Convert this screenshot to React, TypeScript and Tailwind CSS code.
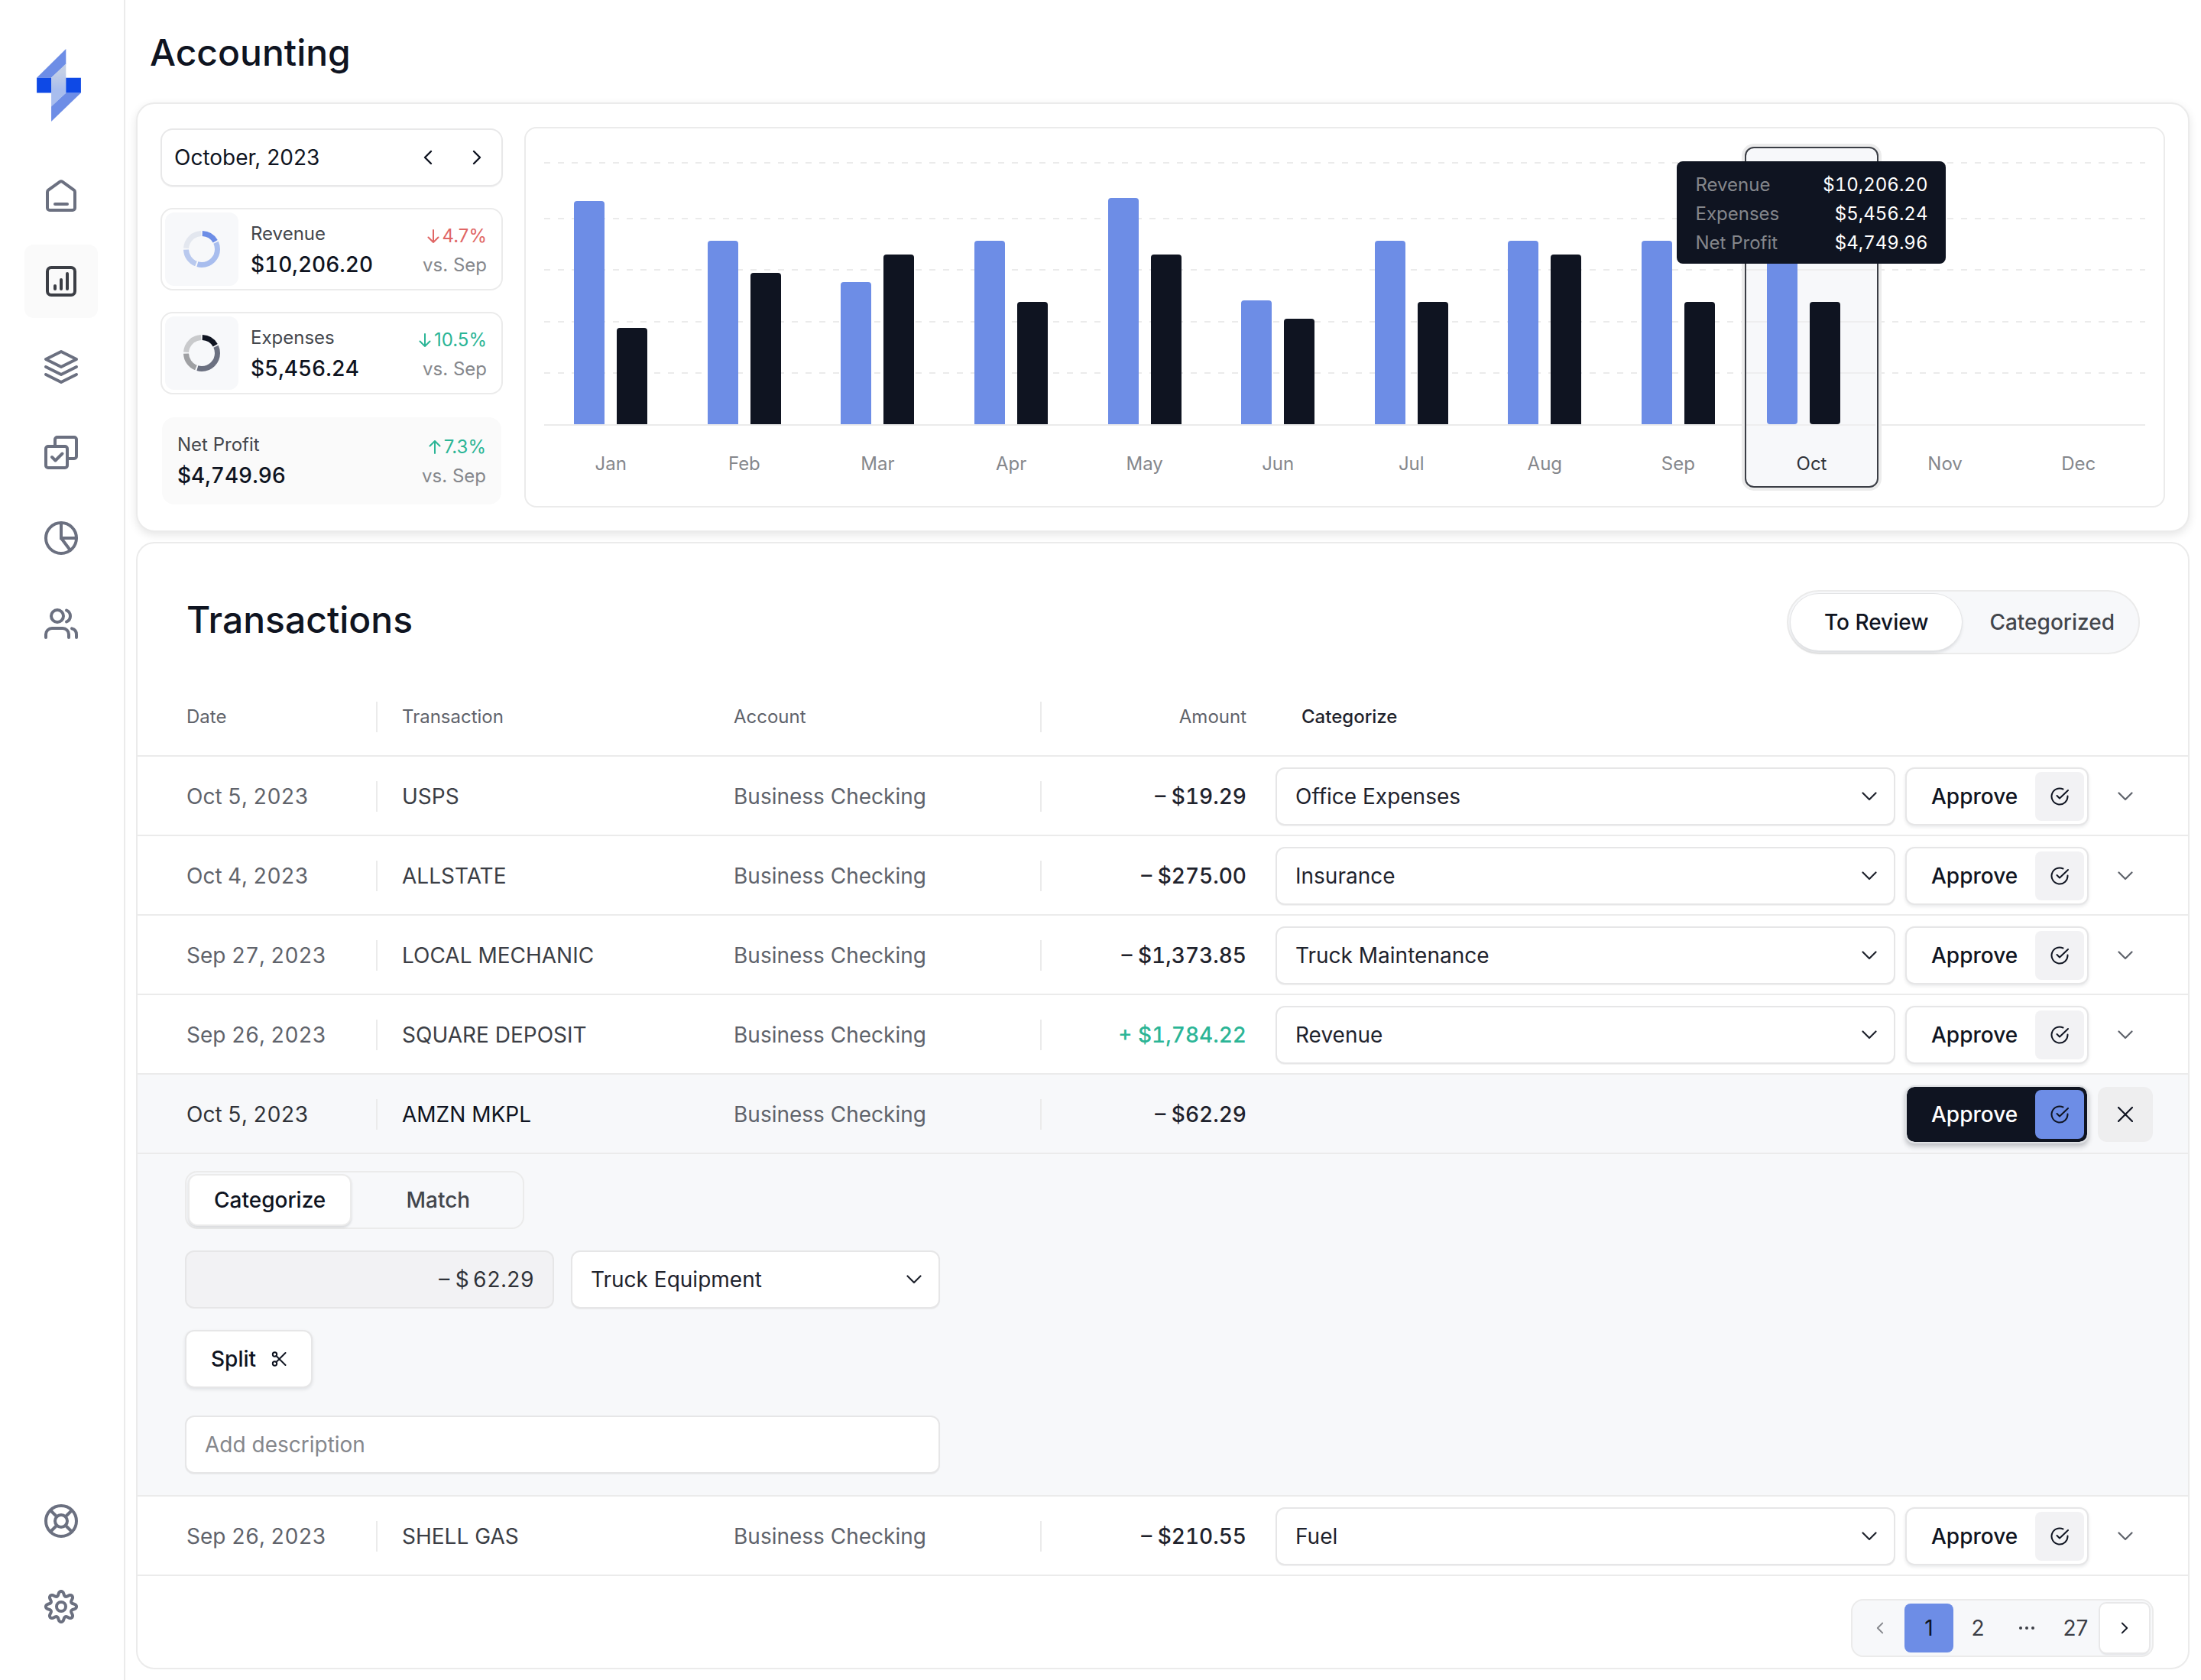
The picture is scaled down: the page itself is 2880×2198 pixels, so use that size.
import React from 'react';
import clsx from 'clsx';

type IconProps = { className?: string };

const months = [
  { name: 'Jan', revenue: 292, expenses: 126 },
  { name: 'Feb', revenue: 240, expenses: 198 },
  { name: 'Mar', revenue: 186, expenses: 222 },
  { name: 'Apr', revenue: 240, expenses: 160 },
  { name: 'May', revenue: 296, expenses: 222 },
  { name: 'Jun', revenue: 162, expenses: 138 },
  { name: 'Jul', revenue: 240, expenses: 160 },
  { name: 'Aug', revenue: 240, expenses: 222 },
  { name: 'Sep', revenue: 240, expenses: 160 },
  { name: 'Oct', revenue: 240, expenses: 160 },
  { name: 'Nov', revenue: 0, expenses: 0 },
  { name: 'Dec', revenue: 0, expenses: 0 },
];

const gridLines = [21, 94, 161, 229, 296];

const transactions = [
  { date: 'Oct 5, 2023', name: 'USPS', amount: '–\u00a0$19.29', category: 'Office Expenses' },
  { date: 'Oct 4, 2023', name: 'ALLSTATE', amount: '–\u00a0$275.00', category: 'Insurance' },
  { date: 'Sep 27, 2023', name: 'LOCAL MECHANIC', amount: '–\u00a0$1,373.85', category: 'Truck Maintenance' },
  { date: 'Sep 26, 2023', name: 'SQUARE DEPOSIT', amount: '+\u00a0$1,784.22', category: 'Revenue' },
  { date: 'Oct 5, 2023', name: 'AMZN MKPL', amount: '–\u00a0$62.29', category: 'Truck Equipment', open: true },
  { date: 'Sep 26, 2023', name: 'SHELL GAS', amount: '–\u00a0$210.55', category: 'Fuel' },
];

// eight rounded teeth around the centre of a 48px box
const gearPath =
  Array.from({ length: 96 }, (_, i) => {
    const a = (i / 96) * Math.PI * 2;
    const wave = Math.cos(a * 8);
    const r = 17.2 + 2.9 * Math.sign(wave) * Math.pow(Math.abs(wave), 0.7);
    return `${i ? 'L' : 'M'}${(24 + r * Math.sin(a)).toFixed(2)} ${(24 - r * Math.cos(a)).toFixed(2)}`;
  }).join('') + 'Z';

const NavIcon = ({ children }: { children: React.ReactNode }) => (
  <svg viewBox="0 0 48 48" className="size-12" fill="none" stroke="currentColor" strokeWidth="4" strokeLinecap="round" strokeLinejoin="round" aria-hidden="true">
    {children}
  </svg>
);

const navItems = [
  {
    label: 'Home',
    icon: (
      <>
        <path d="M6 19.2c0-1 .5-1.9 1.3-2.5L22.2 5.9c1.1-.8 2.5-.8 3.6 0l14.9 10.8c.8.6 1.3 1.5 1.3 2.5V40a3 3 0 0 1-3 3H9a3 3 0 0 1-3-3z" />
        <path d="M16 35h16" />
      </>
    ),
  },
  {
    label: 'Accounting',
    active: true,
    icon: (
      <>
        <rect x="6" y="6" width="36" height="36" rx="5" />
        <path d="M16 30v4M24 22v12M32 14v20" />
      </>
    ),
  },
  { label: 'Layers', icon: <path d="M24 4l20 10-20 10L4 14zM4 24l20 10 20-10M4 34l20 10 20-10" /> },
  {
    label: 'Tasks',
    icon: (
      <>
        <rect x="4" y="16" width="28" height="28" rx="3" />
        <path d="M16 16V7a3 3 0 0 1 3-3h22a3 3 0 0 1 3 3v22a3 3 0 0 1-3 3h-9" />
        <path d="M12 30l4.500 4.500 9-9" />
      </>
    ),
  },
  {
    label: 'Reports',
    icon: (
      <>
        <circle cx="24" cy="24" r="20" />
        <path d="M24 4v20h20M24 24l12 16" strokeLinejoin="miter" />
      </>
    ),
  },
  {
    label: 'People',
    icon: (
      <>
        <circle cx="19" cy="14" r="8" />
        <path d="M31 6.500c3 1.300 5 4.200 5 7.500s-2 6.200-5 7.500" />
        <path d="M4 42v-4a8 8 0 0 1 8-8h14a8 8 0 0 1 8 8v4" />
        <path d="M38 30.400c3.600 1 6 4 6 7.600v4" />
      </>
    ),
  },
];

const footerItems = [
  {
    label: 'Help',
    icon: (
      <>
        <circle cx="24" cy="24" r="20" />
        <circle cx="24" cy="24" r="8" />
        <path d="M10 10l8 8M38 10l-8 8M10 38l8-8M38 38l-8-8" />
      </>
    ),
  },
  {
    label: 'Settings',
    icon: (
      <>
        <path d={gearPath} />
        <circle cx="24" cy="24" r="6" />
      </>
    ),
  },
];

const Logo = () => (
  <svg viewBox="0 0 174 286" className="ml-4 w-[58px] h-[95px]" role="img" aria-label="Logo">
    <defs>
      <linearGradient id="beam" x1="0" y1="0" x2="0" y2="1">
        <stop offset="0.2" stopColor="#c3cfe6" />
        <stop offset="0.6" stopColor="#a8bdee" />
      </linearGradient>
    </defs>
    <path d="M0 114L115 0v60L57 114z" fill="#6d8de6" />
    <path d="M57 226l58-53h59L57 286z" fill="#6d8de6" />
    <path d="M57 114L115 58v115L57 228z" fill="url(#beam)" />
    <path d="M0 114h57v59H0zM115 114h59v59h-59z" fill="#0e49e6" />
  </svg>
);

const ChevronDown = ({ className }: IconProps) => (
  <svg viewBox="0 0 20 12" className={clsx('w-5 h-3', className)} fill="none" stroke="currentColor" strokeWidth="2.200" strokeLinecap="round" strokeLinejoin="round" aria-hidden="true">
    <path d="M1.500 1.500L10 10l8.500-8.500" />
  </svg>
);

const ChevronSide = ({ className }: IconProps) => (
  <svg viewBox="0 0 12 20" className={className} fill="none" stroke="currentColor" strokeWidth="2.400" strokeLinecap="round" strokeLinejoin="round" aria-hidden="true">
    <path d="M2 2l8 8-8 8" />
  </svg>
);

const CheckCircle = () => (
  <svg viewBox="0 0 24 24" className="size-6" fill="none" stroke="currentColor" strokeWidth="2" strokeLinecap="round" strokeLinejoin="round" aria-hidden="true">
    <path d="M22.500 11.500A10.500 10.500 0 1 1 16.500 2.500" />
    <path d="M8.500 11l3.500 3.500L23 4" />
  </svg>
);

const Scissors = () => (
  <svg viewBox="0 0 20 20" className="size-5" fill="none" stroke="currentColor" strokeWidth="2" strokeLinecap="round" aria-hidden="true">
    <circle cx="4.500" cy="4" r="2.700" />
    <circle cx="4.500" cy="16" r="2.700" />
    <path d="M6.500 6L18.500 18M6.500 14L18.500 2" />
  </svg>
);

const Arrow = ({ up }: { up?: boolean }) => (
  <svg viewBox="0 0 16 18" className={clsx('w-4 h-[18px]', up && 'rotate-180')} fill="none" stroke="currentColor" strokeWidth="2" strokeLinecap="round" strokeLinejoin="round" aria-hidden="true">
    <path d="M8 1v16M1.500 10.500L8 17l6.500-6.500" />
  </svg>
);

const Donut = ({ colors }: { colors: string[] }) => {
  // start and length of each slice, in percent of the ring
  const slices = [
    [0.6, 16],
    [18, 36.5],
    [56, 18.5],
    [76, 23.2],
  ];
  return (
    <svg viewBox="0 0 48 48" className="size-12 -rotate-90" fill="none" strokeWidth="7" aria-hidden="true">
      {slices.map(([start, length], i) => (
        <circle key={i} cx="24" cy="24" r="20.500" pathLength="100" stroke={colors[i]} strokeDasharray={`${length} ${100 - length}`} strokeDashoffset={-start} />
      ))}
    </svg>
  );
};

const Change = ({ value, up, className }: { value: string; up?: boolean; className: string }) => (
  <div className="flex flex-col items-end pt-1 text-2xl">
    <span className={clsx('flex items-center gap-1 leading-[38px]', className)}>
      <Arrow up={up} />
      {value}
    </span>
    <span className="leading-[38px] text-[#85878c]">vs. Sep</span>
  </div>
);

const StatCard = ({ label, amount, change, tone, colors }: { label: string; amount: string; change: string; tone: string; colors: string[] }) => (
  <div className="flex items-center rounded-2xl border-2 border-[#ebebeb] p-1 pr-[19px]">
    <div className="flex size-24 items-center justify-center rounded-xl bg-[#f7f8fa]">
      <Donut colors={colors} />
    </div>
    <div className="ml-4 flex flex-1 flex-col">
      <span className="text-2xl leading-10 text-[#43464c]">{label}</span>
      <span className="text-[28px] leading-10 font-medium tabular-nums">{amount}</span>
    </div>
    <Change value={change} className={tone} />
  </div>
);

const Tooltip = () => (
  <dl className="absolute top-[19px] left-1/2 z-10 flex w-[352px] -translate-x-1/2 flex-col rounded-lg bg-[#0f1421] px-6 pt-3 pb-2 text-2xl leading-[38px]">
    {[
      ['Revenue', '$10,206.20'],
      ['Expenses', '$5,456.24'],
      ['Net Profit', '$4,749.96'],
    ].map(([label, value]) => (
      <div key={label} className="flex justify-between">
        <dt className="text-[#85878c]">{label}</dt>
        <dd className="tabular-nums text-white">{value}</dd>
      </div>
    ))}
  </dl>
);

const Chart = () => (
  <div className="flex-1 rounded-2xl border-2 border-[#ebebeb] p-6">
    <div className="relative flex h-[446px]">
      <svg className="absolute inset-0 size-full" stroke="#ebebeb" strokeWidth="2" aria-hidden="true">
        {gridLines.map((y) => (
          <line key={y} x1="0" x2="100%" y1={y} y2={y} strokeDasharray="8 10" />
        ))}
        <line x1="0" x2="100%" y1="364" y2="364" />
      </svg>
      {months.map((month) => {
        const active = month.name === 'Oct';
        return (
          <div
            key={month.name}
            className={clsx('relative flex flex-1 flex-col', active && 'rounded-xl bg-[#f7f8fa] shadow-[0_0_0_4px_#ececec] outline-2 -outline-offset-2 outline-[#3b3e45]')}
          >
            {active && (
              <svg className="absolute inset-0 size-full" stroke="#eeeeef" strokeWidth="2" aria-hidden="true">
                {[161, 229, 296, 364].map((y) => (
                  <line key={y} x1="2" x2="98%" y1={y} y2={y} />
                ))}
              </svg>
            )}
            <div className={clsx('relative flex h-[363px] items-end justify-center gap-4', active && 'pr-5')}>
              {month.revenue > 0 && (
                <>
                  <div className={clsx('w-10 rounded-t bg-[#6d8de6]', active && 'rounded-b')} style={{ height: month.revenue }} />
                  <div className={clsx('w-10 rounded-t bg-[#0f1421]', active && 'rounded-b')} style={{ height: month.expenses }} />
                </>
              )}
            </div>
            <span className={clsx('mt-9 text-center text-2xl leading-8', active ? 'text-[#2f3238]' : 'text-[#85878c]')}>{month.name}</span>
            {active && <Tooltip />}
          </div>
        );
      })}
    </div>
  </div>
);

const CategorySelect = ({ value, label }: { value: string; label: string }) => (
  <div className="relative">
    <select aria-label={label} defaultValue={value} className="h-[76px] w-full appearance-none rounded-xl border-2 border-[#e6e6e7] bg-white pr-16 pl-6 text-[28px] text-[#1f232d] shadow-[0_1px_1px_#0000000f]">
      <option>{value}</option>
    </select>
    <ChevronDown className="pointer-events-none absolute top-8 right-6 text-[#1f232d]" />
  </div>
);

const ApproveButton = ({ open }: { open?: boolean }) => (
  <button
    className={clsx(
      'flex h-[76px] w-60 items-center justify-between rounded-xl border-2 pr-1 pl-8 text-[28px] font-medium',
      open ? 'border-[#dfe1e4] bg-[#0f1421] bg-clip-padding text-white shadow-[0_4px_6px_#0f142140]' : 'border-[#e6e6e7] bg-white shadow-[0_2px_4px_#0f142118]',
    )}
  >
    Approve
    <span className={clsx('flex size-16 items-center justify-center rounded-lg text-[#0f1421]', open ? 'bg-[#6d8de6]' : 'bg-[#f2f2f4]')}>
      <CheckCircle />
    </span>
  </button>
);

const Divider = () => <span className="mr-8 h-10 w-[2px] shrink-0 bg-[#ebebeb]" />;

const Details = () => (
  <div className="flex flex-col items-start gap-7 px-[62px] pt-5 pb-7">
    <div className="flex h-[76px] rounded-2xl border-2 border-[#ebebeb] p-[2px] text-[28px] font-medium">
      <button className="rounded-xl border-2 border-[#ebebeb] bg-white px-8 shadow-[0_2px_3px_#0f142122]">Categorize</button>
      <button className="w-[222px] pl-1 text-[#43464c]">Match</button>
    </div>
    <div className="grid w-full max-w-[988px] grid-cols-2 gap-[22px]">
      <input aria-label="Amount" readOnly value={'–\u00a0$\u200962.29'} className="h-[76px] min-w-0 rounded-xl border-2 border-[#e6e6e7] bg-[#f2f2f4] px-6 text-right text-[28px] tabular-nums text-[#2f3238]" />
      <CategorySelect value="Truck Equipment" label="Category" />
    </div>
    <button className="flex h-[76px] items-center gap-5 rounded-xl border-2 border-[#e6e6e7] bg-white px-8 text-[28px] font-medium shadow-[0_2px_4px_#0f142118]">
      Split
      <Scissors />
    </button>
    <input aria-label="Description" placeholder="Add description" className="mt-2 h-[76px] w-full max-w-[988px] rounded-xl border-2 border-[#e6e6e7] bg-white px-6 text-[28px] shadow-[0_1px_1px_#0000000f] placeholder:text-[#85878c]" />
  </div>
);

const TransactionTable = () => (
  <table className="w-full table-fixed border-separate border-spacing-0 text-left text-[28px] [&_td]:border-b-2 [&_td]:border-[#ebebeb] [&_td]:pt-[2px] [&_th]:border-b-2 [&_th]:border-[#ebebeb] [&_th]:pt-[2px]">
    <thead>
      <tr className="h-[104px] text-2xl text-[#5f636b] [&_th]:font-normal">
        <th className="w-[312px] pl-16">Date</th>
        <th className="w-[468px]">
          <div className="flex items-center">
            <Divider />
            Transaction
          </div>
        </th>
        <th className="w-[401px]">Account</th>
        <th className="w-[308px] pr-[38px]">
          <div className="flex items-center">
            <Divider />
            <span className="ml-auto">Amount</span>
          </div>
        </th>
        <th className="pl-[34px] text-[#1f232d]">
          <span className="font-medium">Categorize</span>
        </th>
        <th className="w-[370px]" aria-label="Actions" />
      </tr>
    </thead>
    <tbody>
      {transactions.map((row) => (
        <React.Fragment key={row.name}>
          <tr className={clsx('h-[104px]', row.open && 'bg-[#f7f8fa]')}>
            <td className={clsx('pl-16 tabular-nums', row.open ? 'text-[#2f3238]' : 'text-[#5f636b]')}>{row.date}</td>
            <td className={row.open ? 'text-[#0f1421]' : 'text-[#3b3e45]'}>
              <div className="flex items-center">
                <Divider />
                {row.name}
              </div>
            </td>
            <td className="text-[#5f636b]">Business Checking</td>
            <td className="pr-[38px]">
              <div className="flex items-center">
                <Divider />
                <span className={clsx('ml-auto font-medium tabular-nums', row.amount.startsWith('+') ? 'text-[#2bb596]' : 'text-[#1f232d]')}>{row.amount}</span>
              </div>
            </td>
            <td className="pr-[13px]">{!row.open && <CategorySelect value={row.category} label={`Category for ${row.name}`} />}</td>
            <td>
              <div className="flex items-center gap-3">
                <ApproveButton open={row.open} />
                {row.open ? (
                  <button aria-label="Close" className="flex size-[72px] items-center justify-center rounded-xl bg-[#eeeeef]">
                    <svg viewBox="0 0 20 20" className="size-5" stroke="currentColor" strokeWidth="2.200" strokeLinecap="round" aria-hidden="true">
                      <path d="M1 1l18 18M19 1L1 19" />
                    </svg>
                  </button>
                ) : (
                  <button aria-label="Expand" className="flex size-[72px] items-center justify-center text-[#5f636b]">
                    <ChevronDown />
                  </button>
                )}
              </div>
            </td>
          </tr>
          {row.open && (
            <tr className="bg-[#f7f8fa]">
              <td colSpan={6}>
                <Details />
              </td>
            </tr>
          )}
        </React.Fragment>
      ))}
    </tbody>
  </table>
);

const Pagination = () => (
  <nav aria-label="Pages" className="flex justify-end pt-[30px] pr-[45px] pb-[13px] text-[28px] text-[#3b3e45]">
    <div className="flex items-center rounded-2xl border-2 border-[#ebebeb] bg-[#f7f8fa] p-1 [&>*]:flex [&>*]:size-16 [&>*]:items-center [&>*]:justify-center [&>*]:rounded-lg">
      <button aria-label="Previous page" className="text-[#85878c]">
        <ChevronSide className="h-4 w-[10px] rotate-180" />
      </button>
      <button className="bg-[#6d8de6] text-[#0f1421]">1</button>
      <button>2</button>
      <span className="gap-1">
        {[0, 1, 2].map((dot) => (
          <i key={dot} className="size-1 rounded-full bg-current" />
        ))}
      </span>
      <button>27</button>
      <button aria-label="Next page" className="bg-white text-[#0f1421] shadow-[0_0_0_2px_#e8e8e9,0_3px_2px_#0f142118]">
        <ChevronSide className="h-4 w-[10px]" />
      </button>
    </div>
  </nav>
);

const NavLink = ({ label, active, icon }: { label: string; active?: boolean; icon: React.ReactNode }) => (
  <a href="#" aria-label={label} className={clsx('flex size-24 items-center justify-center rounded-xl', active ? 'bg-[#fafafa] text-[#3b3e45]' : 'text-[#6b7080]')}>
    <NavIcon>{icon}</NavIcon>
  </a>
);

const App: React.FC = () => {
  return (
    <div className="flex min-h-screen bg-white font-['Inter',sans-serif] text-[#0f1421]">
      <aside className="flex w-[164px] shrink-0 flex-col border-r-2 border-[#ebebeb] pt-16 pb-12 pl-8">
        <Logo />
        <nav className="mt-[49px] flex flex-col gap-4">
          {navItems.map((item) => (
            <NavLink key={item.label} {...item} />
          ))}
        </nav>
        <div className="mt-auto flex flex-col gap-4">
          {footerItems.map((item) => (
            <NavLink key={item.label} {...item} />
          ))}
        </div>
      </aside>

      <main className="flex min-w-0 flex-1 flex-col pr-[15px] pb-[14px] pl-[14px]">
        <h1 className="pt-1 pl-[18px] text-5xl leading-[130px] font-medium">Accounting</h1>

        <section className="flex gap-7 rounded-3xl border-2 border-[#ebebeb] bg-white p-[30px] shadow-[0_4px_12px_#0000001a]">
          <div className="flex w-[448px] shrink-0 flex-col gap-7 pt-[2px]">
            <div className="flex h-[76px] items-center rounded-2xl border-2 border-[#e8e8e9] pl-4 shadow-[0_1px_1px_#0000000f]">
              <span className="flex-1 text-[28px]">October, 2023</span>
              <button aria-label="Previous month" className="flex h-full w-16 items-center justify-center">
                <ChevronSide className="h-5 w-3 rotate-180" />
              </button>
              <button aria-label="Next month" className="flex h-full w-16 items-center justify-center">
                <ChevronSide className="h-5 w-3" />
              </button>
            </div>
            <StatCard label="Revenue" amount="$10,206.20" change="4.7%" tone="text-[#e06665]" colors={['#6d8de6', '#a8bdee', '#b9c9ee', '#e3e7ef']} />
            <StatCard label="Expenses" amount="$5,456.24" change="10.5%" tone="text-[#2bb596]" colors={['#0f1421', '#6b7080', '#9fa0a3', '#c9cacc']} />
            <div className="mx-[2px] mt-[2px] flex h-[114px] items-center rounded-2xl bg-[#fafafa] px-5 pb-[2px]">
              <div className="flex flex-1 flex-col">
                <span className="text-2xl leading-10 text-[#43464c]">Net Profit</span>
                <span className="text-[28px] leading-10 font-medium tabular-nums">$4,749.96</span>
              </div>
              <Change value="7.3%" up className="text-[#2bb596]" />
            </div>
          </div>
          <Chart />
        </section>

        <section className="mt-[13px] flex-1 rounded-3xl border-2 border-[#ebebeb] bg-white">
          <div className="flex items-start justify-between pt-[61px] pr-[63px] pb-[30px] pl-16">
            <h2 className="text-5xl leading-[78px] font-medium">Transactions</h2>
            <div className="flex h-[84px] rounded-full border-2 border-[#ebebeb] bg-[#f7f8fa] p-[3px] text-[28px] font-medium">
              <button className="rounded-full bg-white px-11 shadow-[0_0_0_1px_#e3e4e6,0_3px_4px_#0f142122]">To Review</button>
              <button className="pr-7 pl-9 text-[#43464c]">Categorized</button>
            </div>
          </div>
          <TransactionTable />
          <Pagination />
        </section>
      </main>
    </div>
  );
};

export default App;
